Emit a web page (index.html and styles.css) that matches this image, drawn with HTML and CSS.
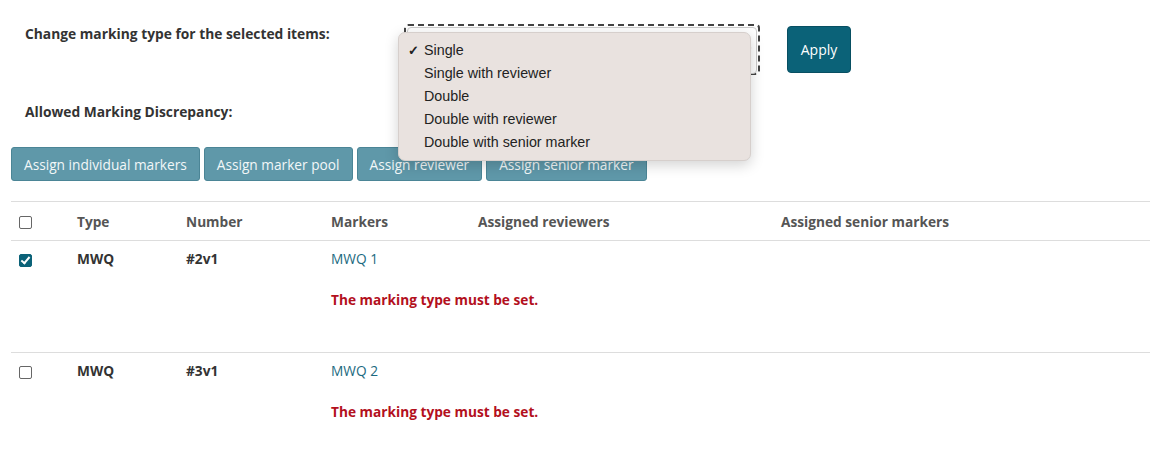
FILE: index.html
```html
<!DOCTYPE html>
<html lang="en">
<head>
  <meta charset="UTF-8" />
  <title>Marking</title>
  <link rel="stylesheet" href="styles.css">
</head>
<body>

<section class="marking--settings">
  <div class="settings--row">
    <label class="settings--label">Change marking type for the selected items:</label>
    <div class="select--wrap">
      <div class="select--box">
        <span class="select--chevron"></span>
      </div>
      <ul class="select--menu">
        <li class="selected">Single</li>
        <li>Single with reviewer</li>
        <li>Double</li>
        <li>Double with reviewer</li>
        <li>Double with senior marker</li>
      </ul>
    </div>
    <button class="btn--apply">Apply</button>
  </div>
  <div class="settings--row second">
    <label class="settings--label">Allowed Marking Discrepancy:</label>
  </div>
</section>

<div class="assign--bar">
  <button class="btn--assign">Assign individual markers</button>
  <button class="btn--assign">Assign marker pool</button>
  <button class="btn--assign">Assign reviewer</button>
  <button class="btn--assign">Assign senior marker</button>
</div>

<table class="items--table">
  <thead>
    <tr>
      <th class="col--check"><span class="checkbox"></span></th>
      <th class="col--type">Type</th>
      <th class="col--number">Number</th>
      <th class="col--markers">Markers</th>
      <th class="col--reviewers">Assigned reviewers</th>
      <th class="col--senior">Assigned senior markers</th>
    </tr>
  </thead>
  <tbody>
    <tr>
      <td class="col--check"><span class="checkbox checked"></span></td>
      <td class="strong">MWQ</td>
      <td class="strong">#2v1</td>
      <td>
        <a class="item--link" href="#">MWQ 1</a>
        <p class="item--error">The marking type must be set.</p>
      </td>
      <td></td>
      <td></td>
    </tr>
    <tr>
      <td class="col--check"><span class="checkbox"></span></td>
      <td class="strong">MWQ</td>
      <td class="strong">#3v1</td>
      <td>
        <a class="item--link" href="#">MWQ 2</a>
        <p class="item--error">The marking type must be set.</p>
      </td>
      <td></td>
      <td></td>
    </tr>
  </tbody>
</table>

</body>
</html>
```

FILE: styles.css
```css
body {
  margin: 0;
  font-family: 'Open Sans', 'Noto Sans', sans-serif;
  color: #333;
  background-color: #fff;
}

.marking--settings {
  padding: 24px 0 0 25px;
}

.settings--row {
  display: flex;
  align-items: flex-start;
}

.settings--row.second {
  margin-top: 27px;
}

.settings--label {
  width: 379px;
  font-size: 13.8px;
  font-weight: 700;
  line-height: 20px;
}

.select--wrap {
  position: relative;
  width: 352px;
  height: 47px;
  border: 2px dashed #444;
  border-radius: 4px;
}

.select--box {
  height: 45px;
  margin: 1px;
  border: 1px solid #ccc;
  border-radius: 4px;
  background-color: #fff;
}

.select--chevron {
  position: absolute;
  right: 8px;
  top: 19px;
  width: 5px;
  height: 5px;
  border-right: 1.5px solid #555;
  border-bottom: 1.5px solid #555;
  transform: rotate(45deg);
}

.select--menu {
  position: absolute;
  left: -8px;
  top: 6px;
  width: 351px;
  margin: 0;
  padding: 6px 0;
  list-style: none;
  background-color: #e9e2df;
  border: 1px solid #d6cfcc;
  border-radius: 7px;
  box-shadow: 0 4px 14px rgba(0, 0, 0, 0.18);
  font-family: 'Liberation Sans', Arial, sans-serif;
  font-size: 14.3px;
  line-height: 23px;
  color: #222;
  z-index: 2;
}

.select--menu li {
  position: relative;
  padding-left: 25px;
}

.select--menu li.selected::before {
  content: "\2713";
  position: absolute;
  left: 9px;
  font-size: 13px;
  font-weight: 700;
}

.btn--apply {
  margin: 2px 0 0 27px;
  width: 64px;
  height: 47px;
  border: 1px solid #084f62;
  border-radius: 4px;
  background-color: #0b6278;
  color: #fff;
  font-family: 'Open Sans', sans-serif;
  font-size: 14px;
}

.assign--bar {
  display: flex;
  gap: 4px;
  padding: 25px 0 0 11px;
}

.btn--assign {
  height: 34px;
  padding: 0 12px;
  border: 1px solid #4b8596;
  border-radius: 3px;
  background-color: #5f98a9;
  color: #f2f7f8;
  font-family: 'Open Sans', sans-serif;
  font-size: 13.7px;
}

.items--table {
  margin: 20px 0 0 11px;
  width: 1139px;
  border-collapse: collapse;
  table-layout: fixed;
  font-size: 13.7px;
}

.items--table th {
  height: 38px;
  padding: 0;
  text-align: left;
  color: #555;
  font-weight: 700;
  border-top: 1px solid #ddd;
  border-bottom: 1px solid #ddd;
}

.items--table td {
  vertical-align: top;
  padding: 9px 0 44px;
  line-height: 17px;
  border-bottom: 1px solid #ddd;
}

.items--table tbody tr:last-child td {
  border-bottom: none;
}

.col--check {
  width: 66px;
  padding-left: 8px !important;
  box-sizing: border-box;
}

.col--type {
  width: 109px;
}

.col--number {
  width: 145px;
}

.col--markers {
  width: 147px;
}

.col--reviewers {
  width: 303px;
}

.strong {
  font-weight: 700;
  color: #333;
}

.checkbox {
  display: inline-block;
  width: 11px;
  height: 11px;
  border: 1px solid #666;
  border-radius: 2px;
  vertical-align: middle;
  position: relative;
}

.checkbox.checked {
  background-color: #0b6278;
  border-color: #0b6278;
}

.checkbox.checked::after {
  content: "";
  position: absolute;
  left: 3px;
  top: 0px;
  width: 3px;
  height: 7px;
  border-right: 2px solid #fff;
  border-bottom: 2px solid #fff;
  transform: rotate(40deg);
}

.item--link {
  color: #1c6a80;
  text-decoration: none;
}

.item--error {
  margin: 24px 0 0;
  color: #b3101d;
  font-weight: 700;
  white-space: nowrap;
}
```
